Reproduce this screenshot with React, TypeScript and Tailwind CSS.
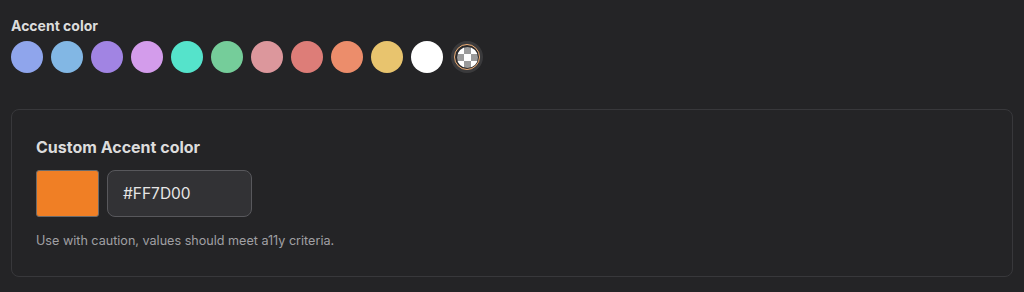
const swatches = [
  "#8fa5ec",
  "#82b7e4",
  "#a184e3",
  "#d39ceb",
  "#55e3cb",
  "#75cd9a",
  "#dc979c",
  "#dd7d78",
  "#ec8d6b",
  "#e8c46e",
  "#ffffff",
];

function CheckerSwatch() {
  return (
    <div className="flex h-8 w-8 items-center justify-center rounded-full bg-[#3a3a3c]">
      <div className="flex h-[26px] w-[26px] items-center justify-center rounded-full border-[1.5px] border-[#f3b37a] bg-[#2a2a2c]">
        <div
          className="h-[21px] w-[21px] rounded-full"
          style={{
            backgroundColor: "#ffffff",
            backgroundImage:
              "linear-gradient(45deg, #9a9a9a 25%, transparent 25%, transparent 75%, #9a9a9a 75%), linear-gradient(45deg, #9a9a9a 25%, transparent 25%, transparent 75%, #9a9a9a 75%)",
            backgroundSize: "14px 14px",
            backgroundPosition: "0px 0px, 7px 7px",
          }}
        />
      </div>
    </div>
  );
}

export default function App() {
  return (
    <div className="h-[292px] w-full bg-[#242426] px-[11px] pt-[18px] font-['Inter',sans-serif]">
      <div className="text-[14px] font-bold leading-4 text-[#dcdcdc]">Accent color</div>
      <div className="mt-[7px] flex gap-2">
        {swatches.map((c) => (
          <div key={c} className="h-8 w-8 rounded-full" style={{ backgroundColor: c }} />
        ))}
        <CheckerSwatch />
      </div>

      <div className="mt-9 rounded-lg border border-[#38383b] px-6 pb-[25px] pt-[27px]">
        <div className="text-[16px] font-bold leading-5 text-[#dcdcdc]">Custom Accent color</div>
        <div className="mt-[13px] flex gap-2">
          <div className="h-[47px] w-[63px] rounded-[3px] border border-[#6b6b6b] bg-[#f07f25]" />
          <div className="flex h-[47px] w-[145px] items-center rounded-lg border border-[#58585c] bg-[#323235] px-[15px] text-[15.5px] text-[#e6e6e6]">
            #FF7D00
          </div>
        </div>
        <div className="mt-[15px] text-[12.6px] text-[#a0a0a4]">
          Use with caution, values should meet a11y criteria.
        </div>
      </div>
    </div>
  );
}
